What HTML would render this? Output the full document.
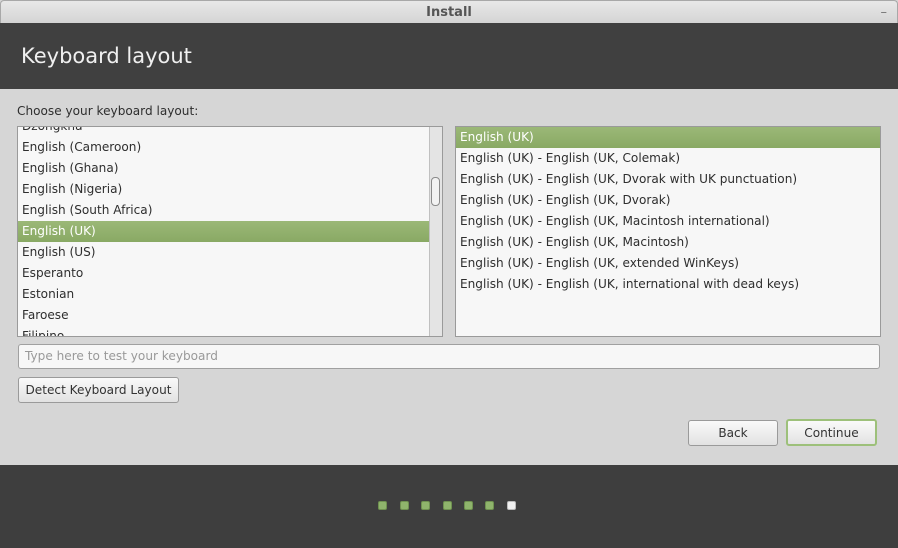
<!DOCTYPE html>
<html><head><meta charset="utf-8"><style>
*{margin:0;padding:0;box-sizing:border-box}
body{width:898px;height:548px;overflow:hidden;background:#d6d6d6;font-family:"DejaVu Sans","Liberation Sans",sans-serif;font-size:12.1px;color:#2e2e2e;position:relative}
.abs{position:absolute}
#tb{left:0;top:0;width:898px;height:23px;background:linear-gradient(#e8e8e8,#d4d4d4);border:1px solid #a8a8a8;border-bottom:none;border-radius:4px 4px 0 0;text-align:center;font-weight:bold;color:#555;font-size:13px;line-height:24px}
#hd{left:0;top:23px;width:898px;height:66px;background:#404040;color:#f0f0f0;font-size:21px;padding-left:21px;line-height:66px}
#ft{left:0;top:465px;width:898px;height:83px;background:#3e3e3e}
.box{background:#f7f7f7;border:1px solid #9a9a9a;overflow:hidden}
.row{height:21px;line-height:21px;padding-left:4px;white-space:nowrap}
.sel{background:linear-gradient(#9bb877,#89a964);color:#fff}
.btn{background:linear-gradient(#fafafa,#e2e2e2);border:1px solid #9a9a9a;border-radius:3px;text-align:center;color:#333}
.dot{top:501px;width:9px;height:9px;border-radius:2px;background:#8fb46c;border:1px solid #6f9150}
</style></head><body>
<div class="abs" id="tb">Install<span style="position:absolute;right:10px;top:0;font-weight:normal;color:#777">–</span></div>
<div class="abs" id="hd">Keyboard layout</div>
<div class="abs" style="left:17px;top:104px">Choose your keyboard layout:</div>
<div class="abs box" style="left:17px;top:126px;width:426px;height:211px">
 <div style="position:absolute;left:0;top:-11px;width:411px">
  <div class="row">Dzongkha</div>
  <div class="row">English (Cameroon)</div>
  <div class="row">English (Ghana)</div>
  <div class="row">English (Nigeria)</div>
  <div class="row">English (South Africa)</div>
  <div class="row sel">English (UK)</div>
  <div class="row">English (US)</div>
  <div class="row">Esperanto</div>
  <div class="row">Estonian</div>
  <div class="row">Faroese</div>
  <div class="row">Filipino</div>
 </div>
 <div style="position:absolute;left:411px;top:0;width:14px;height:209px;background:#e4e4e4;border-left:1px solid #c0c0c0"></div>
 <div style="position:absolute;left:413px;top:50px;width:9px;height:29px;border:1px solid #8a8a8a;border-radius:4px;background:#f2f2f2"></div>
</div>
<div class="abs box" style="left:455px;top:126px;width:426px;height:211px">
  <div class="row sel">English (UK)</div>
  <div class="row">English (UK) - English (UK, Colemak)</div>
  <div class="row">English (UK) - English (UK, Dvorak with UK punctuation)</div>
  <div class="row">English (UK) - English (UK, Dvorak)</div>
  <div class="row">English (UK) - English (UK, Macintosh international)</div>
  <div class="row">English (UK) - English (UK, Macintosh)</div>
  <div class="row">English (UK) - English (UK, extended WinKeys)</div>
  <div class="row">English (UK) - English (UK, international with dead keys)</div>
</div>
<div class="abs" style="left:18px;top:344px;width:862px;height:25px;background:#f7f7f7;border:1px solid #a0a0a0;border-radius:3px;color:#999;line-height:23px;padding-left:6px">Type here to test your keyboard</div>
<div class="abs btn" style="left:18px;top:377px;width:161px;height:26px;line-height:24px">Detect Keyboard Layout</div>
<div class="abs btn" style="left:688px;top:420px;width:90px;height:26px;line-height:24px">Back</div>
<div class="abs btn" style="left:786px;top:419px;width:91px;height:27px;line-height:25px;border:2px solid #9dc07a">Continue</div>
<div class="abs" id="ft"></div>
<div class="abs dot" style="left:378px"></div>
<div class="abs dot" style="left:400px"></div>
<div class="abs dot" style="left:421px"></div>
<div class="abs dot" style="left:443px"></div>
<div class="abs dot" style="left:464px"></div>
<div class="abs dot" style="left:485px"></div>
<div class="abs dot" style="left:507px;background:#f0f0f0;border-color:#bbb"></div>
</body></html>
